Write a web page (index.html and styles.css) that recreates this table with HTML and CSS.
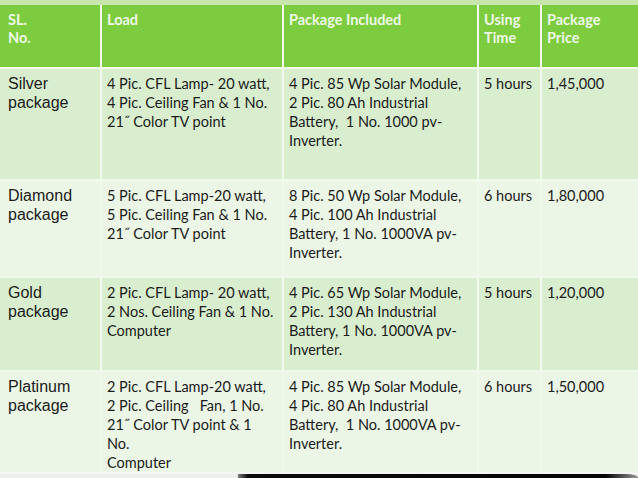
FILE: index.html
```html
<!DOCTYPE html>
<html>
<head>
<meta charset="utf-8">
<link rel="stylesheet" href="styles.css">
</head>
<body>
<div class="page">
  <div class="top-strip"></div>
  <div class="grid">
    <div class="cell head first">SL.<br>No.</div>
    <div class="cell head">Load</div>
    <div class="cell head">Package Included</div>
    <div class="cell head">Using<br>Time</div>
    <div class="cell head">Package<br>Price</div>

    <div class="cell dark name">Silver<br>package</div>
    <div class="cell dark">4 Pic. CFL Lamp- 20 watt,<br>4 Pic. Ceiling Fan &amp; 1 No.<br>21˝ Color TV point</div>
    <div class="cell dark">4 Pic. 85 Wp Solar Module,<br>2 Pic. 80 Ah Industrial<br>Battery,&nbsp; 1 No. 1000 pv-<br>Inverter.</div>
    <div class="cell dark">5 hours</div>
    <div class="cell dark">1,45,000</div>

    <div class="cell light name">Diamond<br>package</div>
    <div class="cell light">5 Pic. CFL Lamp-20 watt,<br>5 Pic. Ceiling Fan &amp; 1 No.<br>21˝ Color TV point</div>
    <div class="cell light">8 Pic. 50 Wp Solar Module,<br>4 Pic. 100 Ah Industrial<br>Battery, 1 No. 1000VA pv-<br>Inverter.</div>
    <div class="cell light">6 hours</div>
    <div class="cell light">1,80,000</div>

    <div class="cell dark name">Gold<br>package</div>
    <div class="cell dark">2 Pic. CFL Lamp- 20 watt,<br>2 Nos. Ceiling Fan &amp; 1 No.<br>Computer</div>
    <div class="cell dark">4 Pic. 65 Wp Solar Module,<br>2 Pic. 130 Ah Industrial<br>Battery, 1 No. 1000VA pv-<br>Inverter.</div>
    <div class="cell dark">5 hours</div>
    <div class="cell dark">1,20,000</div>

    <div class="cell light name">Platinum<br>package</div>
    <div class="cell light">2 Pic. CFL Lamp-20 watt,<br>2 Pic. Ceiling &nbsp; Fan, 1 No.<br>21˝ Color TV point &amp; 1<br>No.<br>Computer</div>
    <div class="cell light">4 Pic. 85 Wp Solar Module,<br>4 Pic. 80 Ah Industrial<br>Battery,&nbsp; 1 No. 1000VA pv-<br>Inverter.</div>
    <div class="cell light">6 hours</div>
    <div class="cell light">1,50,000</div>
  </div>
  <div class="footer">
    <div class="footer-line"></div>
    <div class="footer-band">
      <div class="band-left"></div>
      <div class="band-black"></div>
    </div>
  </div>
</div>
</body>
</html>
```
FILE: styles.css
```css
html, body {
  margin: 0;
  padding: 0;
}
body {
  width: 638px;
  height: 478px;
  overflow: hidden;
  background: #f3f6f1;
}
.page {
  display: flex;
  flex-direction: column;
  width: 638px;
  height: 478px;
}
.top-strip {
  height: 5px;
  background: #c7e6ab;
}
.grid {
  display: grid;
  grid-template-columns: 100px 180px 193px 61px 1fr;
  grid-template-rows: 62px 110px 95px 92px 100px;
  gap: 2px;
  background: #f1f8ec;
}
.cell {
  font-family: Lato, "Open Sans", sans-serif;
  font-size: 14.5px;
  line-height: 19px;
  color: #1b1b1b;
  padding: 5px 4px 0 5px;
  white-space: nowrap;
  overflow: hidden;
}
.head {
  background: #7dcb3e;
  color: #eef8e6;
  font-weight: 700;
  line-height: 18px;
  padding-top: 6px;
}
.first {
  padding-left: 8px;
}
.dark {
  background: #d9eecf;
}
.light {
  background: #ebf6e6;
}
.name {
  font-family: "Liberation Sans", Arial, sans-serif;
  font-size: 16px;
  line-height: 19px;
  padding-left: 8px;
  padding-top: 5px;
}
.footer {
  flex: 1;
  display: flex;
  flex-direction: column;
}
.footer-line {
  height: 2px;
  background: #f4f6f3;
}
.footer-band {
  flex: 1;
  display: flex;
}
.band-left {
  width: 238px;
  background: #eceeeb;
}
.band-black {
  flex: 1;
  background: linear-gradient(90deg, #7a7a7a 0px, #0c0c0c 10px, #050505 92%, #9a9a9a 100%);
  border-top-right-radius: 12px 3px;
}
```
